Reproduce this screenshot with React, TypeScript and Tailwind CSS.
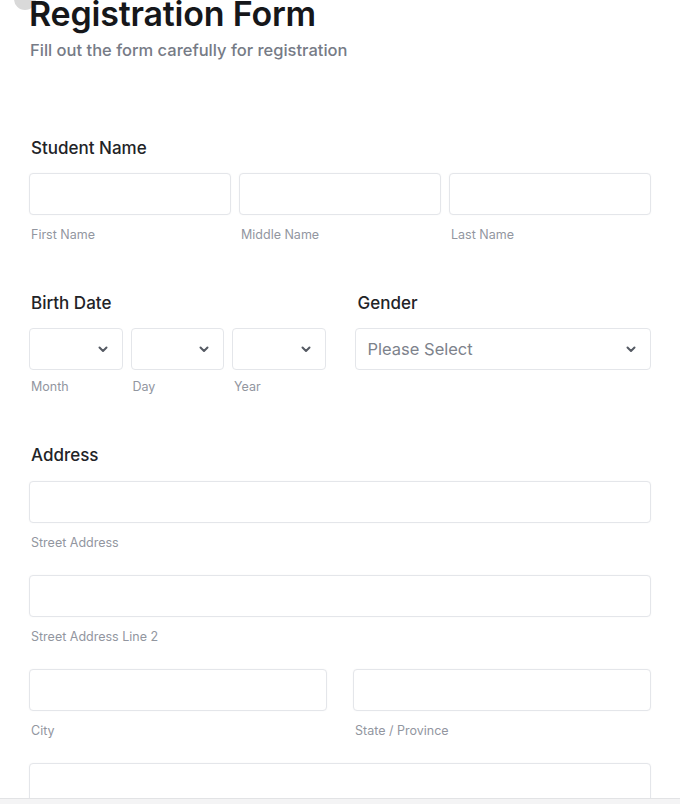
import React from "react";

const Chevron = () => (
  <svg width="10" height="7" viewBox="0 0 10 7" className="shrink-0">
    <polyline points="1.5,1.5 5,5 8.5,1.5" fill="none" stroke="#555a63" strokeWidth="2" strokeLinecap="round" strokeLinejoin="round" />
  </svg>
);

const Box = ({ className = "" }: { className?: string }) => (
  <div className={`h-[42px] rounded-[4px] border border-[#e4e6ea] bg-white shadow-[0_0_2px_rgba(0,0,0,0.04)] ${className}`} />
);

const Select = ({ text }: { text?: string }) => (
  <div className="flex h-[42px] items-center justify-between rounded-[4px] border border-[#e4e6ea] bg-white pl-[12px] pr-[14px]">
    <span className="text-[16.5px] text-[#7d828b]">{text ?? ""}</span>
    <Chevron />
  </div>
);

const Sub = ({ children, className = "" }: { children: React.ReactNode; className?: string }) => (
  <div className={`text-[12.5px] leading-[16px] text-[#92969f] ${className}`}>{children}</div>
);

const Label = ({ children, className = "" }: { children: React.ReactNode; className?: string }) => (
  <div className={`text-[17px] font-medium leading-[24px] text-[#222327] ${className}`}>{children}</div>
);

export default function App() {
  return (
    <div
      className="relative flex h-[804px] w-[680px] flex-col overflow-hidden bg-white"
      style={{ fontFamily: "Inter, 'Noto Sans', sans-serif" }}
    >
      <div className="absolute left-[14px] top-[-12px] h-[22px] w-[22px] rounded-full bg-[#d9d9d9]" />
      <div className="relative flex-1 overflow-hidden px-[29px]">
        <h1 className="-mt-[6px] text-[34px] font-semibold leading-[40px] tracking-[-0.2px] text-[#16171a]">
          Registration Form
        </h1>
        <p className="mt-[6px] pl-[1px] text-[16.5px] font-medium leading-[20px] text-[#767b86]">
          Fill out the form carefully for registration
        </p>

        <Label className="mt-[76px] pl-[2px]">Student Name</Label>
        <div className="mt-[13px] grid grid-cols-3 gap-[8px]">
          <div>
            <Box />
            <Sub className="mt-[12px] pl-[2px]">First Name</Sub>
          </div>
          <div>
            <Box />
            <Sub className="mt-[12px] pl-[2px]">Middle Name</Sub>
          </div>
          <div>
            <Box />
            <Sub className="mt-[12px] pl-[2px]">Last Name</Sub>
          </div>
        </div>

        <div className="mt-[48px] grid grid-cols-2 gap-[29px]">
          <div>
            <Label className="pl-[2px]">Birth Date</Label>
            <div className="mt-[13px] grid grid-cols-3 gap-[8px]">
              <div>
                <Select />
                <Sub className="mt-[9px] pl-[2px]">Month</Sub>
              </div>
              <div>
                <Select />
                <Sub className="mt-[9px] pl-[2px]">Day</Sub>
              </div>
              <div>
                <Select />
                <Sub className="mt-[9px] pl-[2px]">Year</Sub>
              </div>
            </div>
          </div>
          <div>
            <Label className="pl-[3px]">Gender</Label>
            <div className="mt-[13px]">
              <Select text="Please Select" />
            </div>
          </div>
        </div>

        <Label className="mt-[48px] pl-[2px]">Address</Label>
        <Box className="mt-[14px] h-[41px]" />
        <Sub className="mt-[12px] pl-[2px]">Street Address</Sub>
        <Box className="mt-[24px] h-[41px]" />
        <Sub className="mt-[12px] pl-[2px]">Street Address Line 2</Sub>
        <div className="mt-[24px] grid grid-cols-2 gap-[26px]">
          <div>
            <Box />
            <Sub className="mt-[12px] pl-[2px]">City</Sub>
          </div>
          <div>
            <Box />
            <Sub className="mt-[12px] pl-[2px]">State / Province</Sub>
          </div>
        </div>
        <Box className="mt-[24px]" />
      </div>
      <div className="h-[6px] shrink-0 border-t border-[#e2e3e5] bg-[#f4f4f5]" />
    </div>
  );
}
